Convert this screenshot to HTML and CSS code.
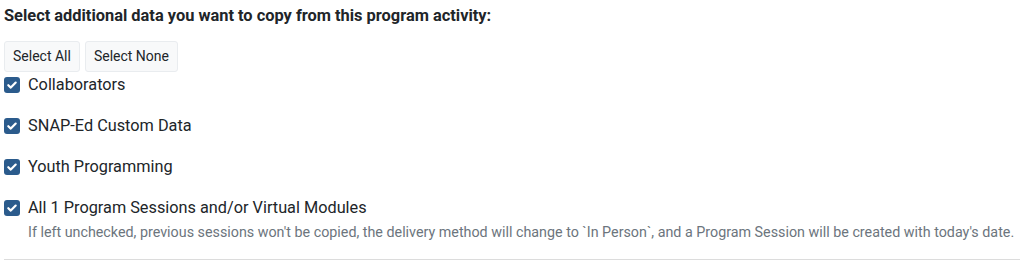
FILE: index.html
```html
<!DOCTYPE html>
<html>
<head>
    <title>Copy Program Activity</title>
    <link rel="stylesheet" href="styles.css">
</head>
<body>
    <div class="copy-form">
        <h5 class="title">Select additional data you want to copy from this program activity:</h5>
        <div class="btn-row">
            <button class="btn">Select All</button>
            <button class="btn">Select None</button>
        </div>
        <div class="check">
            <span class="box"><svg viewBox="0 0 16 16" width="16" height="16"><path d="M4.3 8.2l2.5 2.4 4.9-5" fill="none" stroke="#fff" stroke-width="2.2" stroke-linecap="round" stroke-linejoin="round"/></svg></span>
            <label>Collaborators</label>
        </div>
        <div class="check">
            <span class="box"><svg viewBox="0 0 16 16" width="16" height="16"><path d="M4.3 8.2l2.5 2.4 4.9-5" fill="none" stroke="#fff" stroke-width="2.2" stroke-linecap="round" stroke-linejoin="round"/></svg></span>
            <label>SNAP-Ed Custom Data</label>
        </div>
        <div class="check">
            <span class="box"><svg viewBox="0 0 16 16" width="16" height="16"><path d="M4.3 8.2l2.5 2.4 4.9-5" fill="none" stroke="#fff" stroke-width="2.2" stroke-linecap="round" stroke-linejoin="round"/></svg></span>
            <label>Youth Programming</label>
        </div>
        <div class="check last">
            <span class="box"><svg viewBox="0 0 16 16" width="16" height="16"><path d="M4.3 8.2l2.5 2.4 4.9-5" fill="none" stroke="#fff" stroke-width="2.2" stroke-linecap="round" stroke-linejoin="round"/></svg></span>
            <label>All 1 Program Sessions and/or Virtual Modules</label>
        </div>
        <p class="help">If left unchecked, previous sessions won't be copied, the delivery method will change to `In Person`, and a Program Session will be created with today's date.</p>
        <hr>
    </div>
</body>
</html>
```

FILE: styles.css
```css
* {
    box-sizing: border-box;
    margin: 0;
    padding: 0;
}

body {
    background-color: #fff;
    font-family: Roboto, "Liberation Sans", sans-serif;
    color: #212529;
    margin: 4px;
}

.title {
    font-size: 16.4px;
    font-weight: bold;
    line-height: 24px;
    margin-bottom: 13px;
}

.btn-row {
    display: flex;
    gap: 5px;
}

.btn {
    font-family: Roboto, "Liberation Sans", sans-serif;
    font-size: 14px;
    line-height: 20px;
    color: #212529;
    background-color: #f8f9fa;
    border: 1px solid #e9ecef;
    border-radius: 3px;
    padding: 4px 8px 5px;
}

.check {
    display: flex;
    align-items: center;
    gap: 8px;
    font-size: 16.3px;
    line-height: 24px;
    margin-top: 1px;
    margin-bottom: 17px;
}

.check.last {
    margin-bottom: 0;
}

.box {
    width: 16px;
    height: 16px;
    border-radius: 3px;
    background-color: #2b5b8c;
    display: flex;
}

.help {
    font-size: 14.3px;
    line-height: 20px;
    color: #6c757d;
    margin-left: 24px;
    margin-top: 2px;
}

hr {
    border: none;
    border-top: 1px solid #dcdcdc;
    margin-top: 17px;
}
```
